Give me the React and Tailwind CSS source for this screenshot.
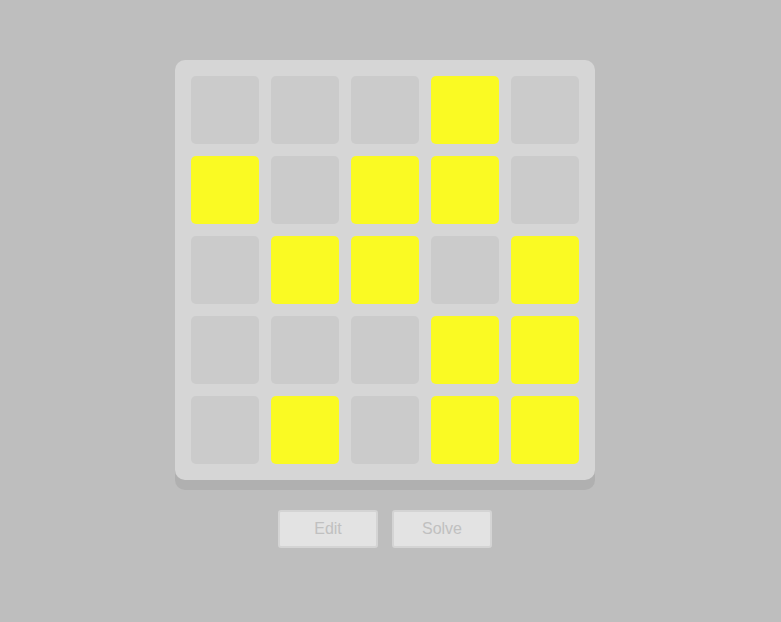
const grid = [
  [0, 0, 0, 1, 0],
  [1, 0, 1, 1, 0],
  [0, 1, 1, 0, 1],
  [0, 0, 0, 1, 1],
  [0, 1, 0, 1, 1],
];

export default function App() {
  return (
    <div className="w-full min-h-[622px] bg-[#bebebe] flex flex-col items-center pt-[60px] pr-[11px]" style={{ fontFamily: '"Liberation Sans", Arial, sans-serif' }}>
      <div className="bg-[#d6d6d6] rounded-[10px] p-4 shadow-[0_10px_0_#b0b0b0] grid grid-cols-5 gap-3">
        {grid.flat().map((v, i) => (
          <div key={i} className={`w-[68px] h-[68px] rounded-[5px] ${v ? 'bg-[#fafa23]' : 'bg-[#cbcbcb]'}`} />
        ))}
      </div>
      <div className="flex gap-[14px] mt-[30px]">
        <button className="w-[100px] h-[38px] bg-[#e3e3e3] border-2 border-[#d4d4d4] rounded-[3px] text-[#c0c0c0] text-base">Edit</button>
        <button className="w-[100px] h-[38px] bg-[#e3e3e3] border-2 border-[#d4d4d4] rounded-[3px] text-[#c0c0c0] text-base">Solve</button>
      </div>
    </div>
  );
}
